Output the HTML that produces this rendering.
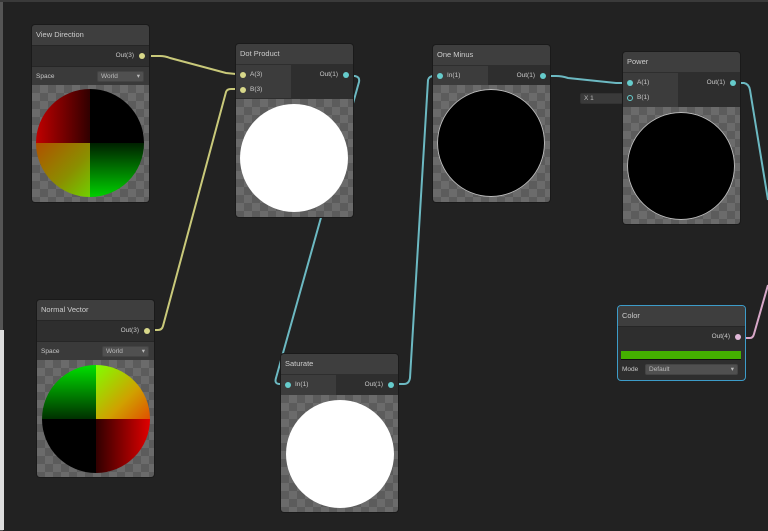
<!DOCTYPE html><html><head><style>
body{margin:0;width:768px;height:531px;background:#222;overflow:hidden;position:relative;font-family:"Liberation Sans",sans-serif;font-size:7px;color:#c8c8c8}
.n{position:absolute;background:#2e2e2e;border-radius:3px;box-shadow:0 0 0 1px #1a1a1a;overflow:hidden}
.h{height:20px;background:#3e3e3e;padding-left:4px;line-height:20px;font-size:7.5px;color:#ccc}
.row{height:20px;position:relative;background:#2e2e2e;border-top:1px solid #262626}
.sp{background:#3a3a3a}
.pv{position:absolute;left:0;right:0;bottom:0;background-color:#5c5c5c;background-image:linear-gradient(45deg,#6b6b6b 25%,transparent 25%,transparent 75%,#6b6b6b 75%),linear-gradient(45deg,#6b6b6b 25%,transparent 25%,transparent 75%,#6b6b6b 75%);background-size:16px 16px;background-position:0 0,8px 8px}
.c{position:absolute;border-radius:50%;overflow:hidden;width:108px;height:108px}
.q{position:absolute;width:54px;height:54px}
.dot{position:absolute;width:6px;height:6px;border-radius:50%}
.t{position:absolute;font-size:6.5px}
.dd{position:absolute;background:#505050;border:1px solid #444;color:#bbb;font-size:6.5px;height:9px;line-height:9px;padding-left:3px;border-radius:2px}
</style></head><body>
<div style="position:absolute;left:0;top:0;width:3px;height:531px;background:#555"></div>
<div style="position:absolute;left:0;top:0;width:768px;height:2px;background:#3a3a3a"></div>
<div style="position:absolute;left:0;top:330px;width:4px;height:200px;background:#ddd"></div>

<svg style="position:absolute;left:0;top:0" width="768" height="531">
<g fill="none" stroke-width="2">
<path d="M151 56 L160 56 Q165 56 170 58 L226 73 L236 74" stroke="#c9c97a"/>
<path d="M152 330 L158 330 Q162 330 163 326 L226 92 Q227 89 231 89 L236 89" stroke="#c9c97a"/>
<path d="M347 76 L355 76 Q360 77 359 82 L276 378 Q274 384 280 384" stroke="#6cb9c2"/>
<path d="M394 384 L404 384 Q409 384 410 378 L428 80 Q429 76 434 76 L438 76" stroke="#6cb9c2"/>
<path d="M545 76 L556 76 Q562 76 568 78 L616 83 L627 83" stroke="#6cb9c2"/>
<path d="M735 83 L744 83 Q749 84 750 90 L768 200" stroke="#6cb9c2"/>
<path d="M739 338 L750 338 Q753 338 754 334 L768 285" stroke="#d8a8c8"/>
</g></svg>

<!-- View Direction -->
<div class="n" style="left:32px;top:25px;width:117px;height:177px">
<div class="h">View Direction</div>
<div class="row"><span class="t" style="right:15px;top:6px">Out(3)</span><div class="dot" style="right:4px;top:7px;background:#d8d88a"></div></div>
<div class="row sp"><span class="t" style="left:4px;top:6px">Space</span><div class="dd" style="left:65px;top:4px;width:42px">World<span style="float:right;margin-right:3px">▾</span></div></div>
<div class="pv" style="height:117px">
<div class="c" style="left:4px;top:4px">
<div class="q" style="left:0;top:0;background:linear-gradient(to right,#c00000,#300000)"></div>
<div class="q" style="left:54px;top:0;background:#000"></div>
<div class="q" style="left:0;top:54px;background:linear-gradient(135deg,#b05000,#8a9000 60%,#70d000)"></div>
<div class="q" style="left:54px;top:54px;background:linear-gradient(to bottom,#002000,#00d000)"></div>
</div></div></div>

<!-- Dot Product -->
<div class="n" style="left:236px;top:44px;width:117px;height:173px">
<div class="h">Dot Product</div>
<div style="position:absolute;left:0;top:21px;width:55px;height:33px;background:#3c3c3c"></div>
<div class="dot" style="left:4px;top:28px;background:#d8d88a"></div><span class="t" style="left:14px;top:27px">A(3)</span>
<div class="dot" style="left:4px;top:43px;background:#d8d88a"></div><span class="t" style="left:14px;top:42px">B(3)</span>
<span class="t" style="right:15px;top:27px">Out(1)</span><div class="dot" style="right:4px;top:28px;background:#6cc"></div>
<div class="pv" style="height:118px"><div class="c" style="left:4px;top:5px;background:#fff"></div></div></div>

<!-- One Minus -->
<div class="n" style="left:433px;top:45px;width:117px;height:157px">
<div class="h">One Minus</div>
<div style="position:absolute;left:0;top:21px;width:55px;height:19px;background:#3c3c3c"></div>
<div class="dot" style="left:4px;top:28px;background:#6cc"></div><span class="t" style="left:14px;top:27px">In(1)</span>
<span class="t" style="right:15px;top:27px">Out(1)</span><div class="dot" style="right:4px;top:28px;background:#6cc"></div>
<div class="pv" style="height:117px"><div class="c" style="left:4px;top:4px;background:#000;box-shadow:inset 0 0 0 1px #bbb"></div></div></div>

<!-- Power -->
<div class="dd" style="left:580px;top:93px;width:38px;background:#3a3a3a;border-color:#333">X 1</div>
<div class="n" style="left:623px;top:52px;width:117px;height:172px">
<div class="h">Power</div>
<div style="position:absolute;left:0;top:21px;width:55px;height:34px;background:#3c3c3c"></div>
<div class="dot" style="left:4px;top:28px;background:#6cc"></div><span class="t" style="left:14px;top:27px">A(1)</span>
<div class="dot" style="left:4px;top:43px;border:1px solid #6cc;width:4px;height:4px"></div><span class="t" style="left:14px;top:42px">B(1)</span>
<span class="t" style="right:15px;top:27px">Out(1)</span><div class="dot" style="right:4px;top:28px;background:#6cc"></div>
<div class="pv" style="height:117px"><div class="c" style="left:4px;top:5px;background:#000;box-shadow:inset 0 0 0 1px #bbb"></div></div></div>

<!-- Color -->
<div class="n" style="left:618px;top:306px;width:127px;height:74px;box-shadow:0 0 0 1px #3d9cc9">
<div class="h">Color</div>
<div class="row" style="height:19px"><span class="t" style="right:15px;top:6px">Out(4)</span><div class="dot" style="right:4px;top:7px;background:#e0b8d8"></div></div>
<div style="position:absolute;left:3px;top:45px;width:120px;height:8px;background:#44b000;border-bottom:1px solid #111"></div>
<span class="t" style="left:4px;top:60px">Mode</span><div class="dd" style="left:27px;top:58px;width:88px">Default<span style="float:right;margin-right:3px">▾</span></div>
</div>

<!-- Normal Vector -->
<div class="n" style="left:37px;top:300px;width:117px;height:177px">
<div class="h">Normal Vector</div>
<div class="row"><span class="t" style="right:15px;top:6px">Out(3)</span><div class="dot" style="right:4px;top:7px;background:#d8d88a"></div></div>
<div class="row sp"><span class="t" style="left:4px;top:6px">Space</span><div class="dd" style="left:65px;top:4px;width:42px">World<span style="float:right;margin-right:3px">▾</span></div></div>
<div class="pv" style="height:117px">
<div class="c" style="left:5px;top:5px">
<div class="q" style="left:0;top:0;background:linear-gradient(to bottom,#00e000,#003000)"></div>
<div class="q" style="left:54px;top:0;background:linear-gradient(135deg,#80ff00,#d0a000 60%,#e05000)"></div>
<div class="q" style="left:0;top:54px;background:#000"></div>
<div class="q" style="left:54px;top:54px;background:linear-gradient(to right,#300000,#e00000)"></div>
</div></div></div>

<!-- Saturate -->
<div class="n" style="left:281px;top:354px;width:117px;height:158px">
<div class="h">Saturate</div>
<div style="position:absolute;left:0;top:21px;width:55px;height:20px;background:#3c3c3c"></div>
<div class="dot" style="left:4px;top:28px;background:#6cc"></div><span class="t" style="left:14px;top:27px">In(1)</span>
<span class="t" style="right:15px;top:27px">Out(1)</span><div class="dot" style="right:4px;top:28px;background:#6cc"></div>
<div class="pv" style="height:117px"><div class="c" style="left:5px;top:5px;background:#fff"></div></div></div>
</body></html>
